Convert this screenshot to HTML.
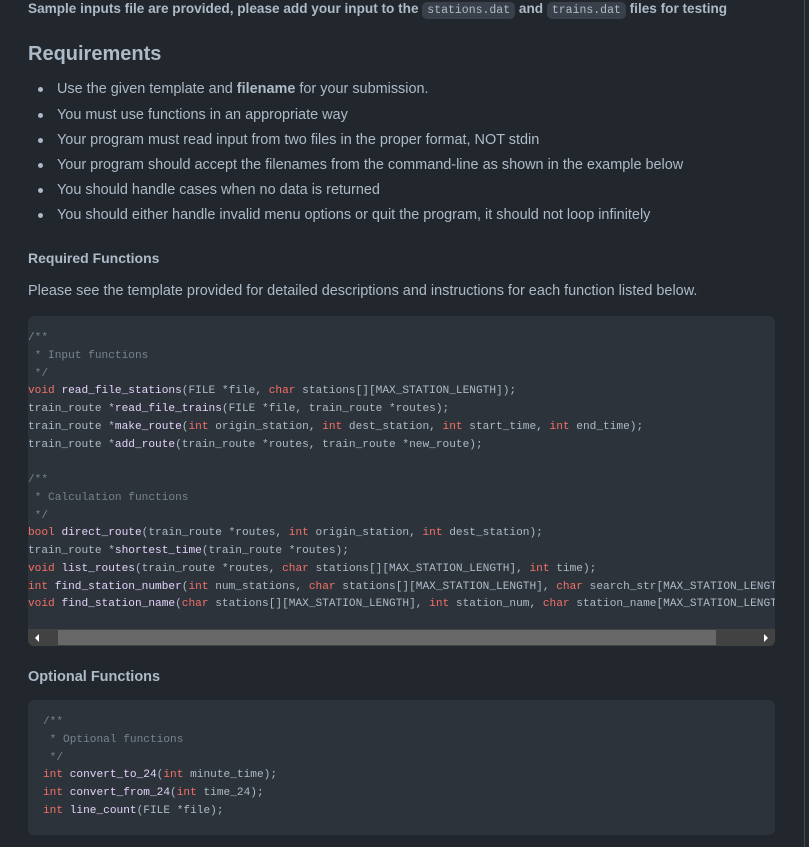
<!DOCTYPE html>
<html><head><meta charset="utf-8"><style>
html,body{margin:0;padding:0;width:809px;height:847px;overflow:hidden;background:#22272e;color:#adbac7;font-family:"Liberation Sans",sans-serif;}
.a{position:absolute;white-space:nowrap;}
.vl{position:absolute;left:804px;top:0;width:1px;height:847px;background:#444c56;}
b{font-weight:bold}
code.i{font-family:"Liberation Mono",monospace;font-size:11.5px;font-weight:normal;background:#394049;border-radius:5px;padding:2px 5px;color:#adbac7;}
ul{margin:0;padding:0;list-style:none}
li{position:absolute;left:57px;font-size:14.45px;line-height:17px;white-space:nowrap}
li:before{content:"";position:absolute;left:-19px;top:6px;width:5px;height:5px;border-radius:50%;background:#adbac7}
.blk{position:absolute;left:28px;width:747px;background:#2d333b;border-radius:6px;overflow:hidden}
pre{margin:0;font-family:"Liberation Mono",monospace;font-size:11.15px;line-height:17.75px;color:#adbac7;white-space:pre;}
.c{color:#768390}.k{color:#f47067}.f{color:#e3d2fb}
</style></head><body>
<div class="vl"></div>
<div class="a" style="left:28px;top:1px;font-size:13.6px;font-weight:bold">Sample inputs file are provided, please add your input to the <code class="i">stations.dat</code> and <code class="i">trains.dat</code> files for testing</div>
<div class="a" style="left:28px;top:43px;font-size:20px;font-weight:bold;color:#adbac7">Requirements</div>
<ul>
<li style="top:81px">Use the given template and <b>filename</b> for your submission.</li>
<li style="top:107px">You must use functions in an appropriate way</li>
<li style="top:132px">Your program must read input from two files in the proper format, NOT stdin</li>
<li style="top:157px">Your program should accept the filenames from the command-line as shown in the example below</li>
<li style="top:182px">You should handle cases when no data is returned</li>
<li style="top:207px">You should either handle invalid menu options or quit the program, it should not loop infinitely</li>
</ul>
<div class="a" style="left:28px;top:250px;font-size:14px;font-weight:bold">Required Functions</div>
<div class="a" style="left:28px;top:283px;font-size:14.45px">Please see the template provided for detailed descriptions and instructions for each function listed below.</div>
<div class="blk" style="top:316px;height:330px">
<pre style="position:absolute;left:0;top:14px"><span class="c">/**
 * Input functions
 */</span>
<span class="k">void</span> <span class="f">read_file_stations</span>(FILE *file, <span class="k">char</span> stations[][MAX_STATION_LENGTH]);
train_route *<span class="f">read_file_trains</span>(FILE *file, train_route *routes);
train_route *<span class="f">make_route</span>(<span class="k">int</span> origin_station, <span class="k">int</span> dest_station, <span class="k">int</span> start_time, <span class="k">int</span> end_time);
train_route *<span class="f">add_route</span>(train_route *routes, train_route *new_route);

<span class="c">/**
 * Calculation functions
 */</span>
<span class="k">bool</span> <span class="f">direct_route</span>(train_route *routes, <span class="k">int</span> origin_station, <span class="k">int</span> dest_station);
train_route *<span class="f">shortest_time</span>(train_route *routes);
<span class="k">void</span> <span class="f">list_routes</span>(train_route *routes, <span class="k">char</span> stations[][MAX_STATION_LENGTH], <span class="k">int</span> time);
<span class="k">int</span> <span class="f">find_station_number</span>(<span class="k">int</span> num_stations, <span class="k">char</span> stations[][MAX_STATION_LENGTH], <span class="k">char</span> search_str[MAX_STATION_LENGTH]);
<span class="k">void</span> <span class="f">find_station_name</span>(<span class="k">char</span> stations[][MAX_STATION_LENGTH], <span class="k">int</span> station_num, <span class="k">char</span> station_name[MAX_STATION_LENGTH]);</pre>
<div style="position:absolute;left:0;top:313px;width:747px;height:17px;background:#424242"></div>
<div style="position:absolute;left:30px;top:314px;width:658px;height:15px;background:#686868"></div>
<div style="position:absolute;left:7px;top:318px;width:0;height:0;border-top:4px solid transparent;border-bottom:4px solid transparent;border-right:4px solid #fff"></div>
<div style="position:absolute;left:736px;top:318px;width:0;height:0;border-top:4px solid transparent;border-bottom:4px solid transparent;border-left:4px solid #fff"></div>
</div>
<div class="a" style="left:28px;top:669px;font-size:14.5px;font-weight:bold">Optional Functions</div>
<div class="blk" style="top:700px;height:135px">
<pre style="position:absolute;left:15px;top:14px"><span class="c">/**
 * Optional functions
 */</span>
<span class="k">int</span> <span class="f">convert_to_24</span>(<span class="k">int</span> minute_time);
<span class="k">int</span> <span class="f">convert_from_24</span>(<span class="k">int</span> time_24);
<span class="k">int</span> <span class="f">line_count</span>(FILE *file);</pre>
</div>
</body></html>
